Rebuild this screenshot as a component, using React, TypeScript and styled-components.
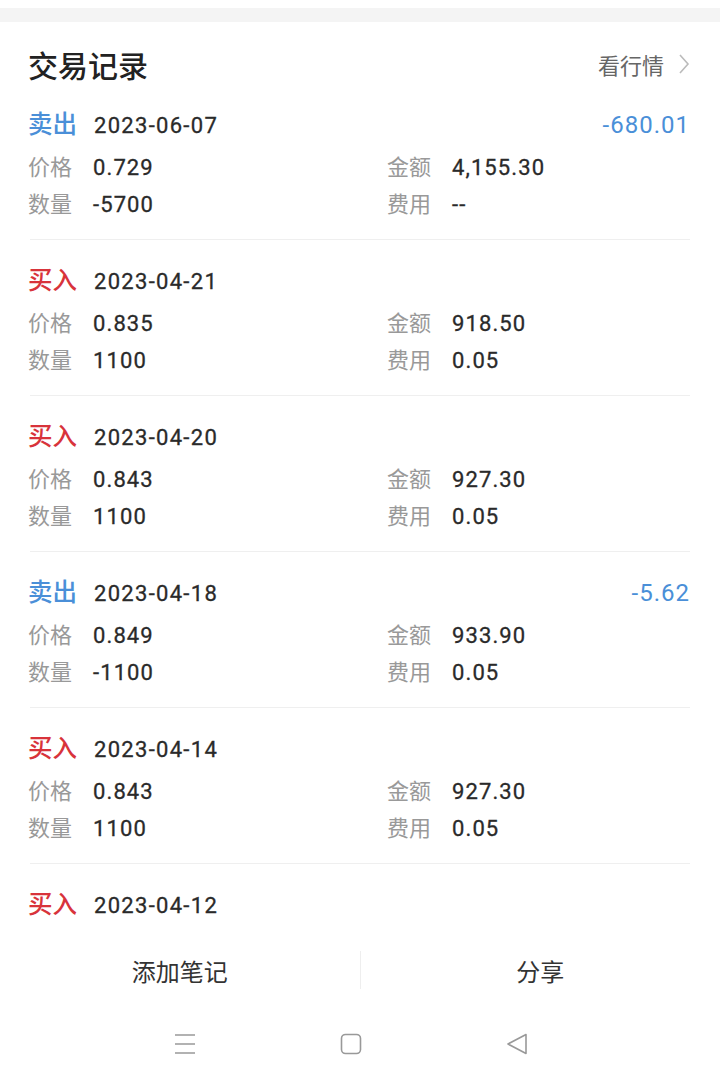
import React from 'react';
import styled, { createGlobalStyle } from 'styled-components';

type Trade = {
    side: 'buy' | 'sell';
    date: string;
    profit?: string;
    price?: string;
    qty?: string;
    amount?: string;
    fee?: string;
};

// the last entry is only partly scrolled into view, its fields sit under the action bar
const trades: Trade[] = [
    { side: 'sell', date: '2023-06-07', profit: '-680.01', price: '0.729', qty: '-5700', amount: '4,155.30', fee: '--' },
    { side: 'buy', date: '2023-04-21', price: '0.835', qty: '1100', amount: '918.50', fee: '0.05' },
    { side: 'buy', date: '2023-04-20', price: '0.843', qty: '1100', amount: '927.30', fee: '0.05' },
    { side: 'sell', date: '2023-04-18', profit: '-5.62', price: '0.849', qty: '-1100', amount: '933.90', fee: '0.05' },
    { side: 'buy', date: '2023-04-14', price: '0.843', qty: '1100', amount: '927.30', fee: '0.05' },
    { side: 'buy', date: '2023-04-12' },
];

const GlobalStyle = createGlobalStyle`
    html, body {
        margin: 0;
        padding: 0;
        background: #fff;
    }
    body {
        font-family: Roboto, "Noto Sans CJK SC", sans-serif;
        -webkit-font-smoothing: antialiased;
    }
`;

const App: React.FC = () => {
    return (
        <SPage>
            <GlobalStyle />
            <STopBand />
            <SList>
                <STitleRow>
                    <STitle>交易记录</STitle>
                    <SMarketLink>
                        看行情
                        <svg width="12" height="22" viewBox="0 0 12 22">
                            <path d="M2 2 L10 11 L2 20" fill="none" stroke="#bbb" strokeWidth="1.6" />
                        </svg>
                    </SMarketLink>
                </STitleRow>
                {trades.map((t, i) => (
                    <SRecord key={i}>
                        <SHeader>
                            <SSide $side={t.side}>{t.side === 'buy' ? '买入' : '卖出'}</SSide>
                            <SDate>{t.date}</SDate>
                            {t.profit && <SProfit>{t.profit}</SProfit>}
                        </SHeader>
                        {t.price && (
                            <SGrid>
                                <SField>
                                    <SLabel>价格</SLabel>
                                    <SValue>{t.price}</SValue>
                                </SField>
                                <SField>
                                    <SLabel>金额</SLabel>
                                    <SValue>{t.amount}</SValue>
                                </SField>
                                <SField>
                                    <SLabel>数量</SLabel>
                                    <SValue>{t.qty}</SValue>
                                </SField>
                                <SField>
                                    <SLabel>费用</SLabel>
                                    <SValue>{t.fee}</SValue>
                                </SField>
                            </SGrid>
                        )}
                    </SRecord>
                ))}
            </SList>
            <SActionBar>
                <SAction>添加笔记</SAction>
                <SActionDivider />
                <SAction>分享</SAction>
            </SActionBar>
            <SNavBar>
                <svg width="22" height="22" viewBox="0 0 22 22">
                    <path d="M1 2 H21 M1 11 H21 M1 20 H21" stroke="#999" strokeWidth="1.6" fill="none" />
                </svg>
                <svg width="22" height="22" viewBox="0 0 22 22">
                    <rect x="1.5" y="1.5" width="19" height="19" rx="4" stroke="#999" strokeWidth="1.6" fill="none" />
                </svg>
                <svg width="22" height="22" viewBox="0 0 22 22">
                    <path d="M20 1.5 L2 11 L20 20.5 Z" stroke="#999" strokeWidth="1.6" strokeLinejoin="round" fill="none" />
                </svg>
            </SNavBar>
        </SPage>
    );
};

export default App;

const SPage = styled.div`
    display: flex;
    flex-direction: column;
    height: 1082px;
    width: 720px;
    background: #fff;
    overflow: hidden;
`;

const STopBand = styled.div`
    height: 14px;
    margin-top: 8px;
    background: #f4f4f4;
    flex-shrink: 0;
`;

const SList = styled.div`
    flex: 1;
    overflow: hidden;
    padding: 0 30px 0 28px;
`;

const STitleRow = styled.div`
    display: flex;
    align-items: center;
    justify-content: space-between;
    height: 40px;
    margin-top: 22px;
`;

const STitle = styled.div`
    font-size: 30px;
    font-weight: 500;
    color: #222;
    font-family: "Noto Sans CJK SC", sans-serif;
`;

const SMarketLink = styled.div`
    display: flex;
    align-items: center;
    gap: 14px;
    font-size: 22px;
    color: #666;
    font-family: "Noto Sans CJK SC", sans-serif;
`;

const SRecord = styled.div`
    padding: 21px 0 18px;
    border-bottom: 1px solid #efefef;
    margin-left: 2px;

    &:last-child {
        border-bottom: none;
    }
`;

const SHeader = styled.div`
    display: flex;
    align-items: baseline;
    height: 36px;
    line-height: 36px;
    margin-left: -2px;
`;

const SSide = styled.span<{ $side: 'buy' | 'sell' }>`
    font-size: 24.5px;
    font-weight: 500;
    font-family: "Noto Sans CJK SC", sans-serif;
    color: ${p => (p.$side === 'buy' ? '#d8333b' : '#4a8fd8')};
`;

const SDate = styled.span`
    margin-left: 17px;
    font-size: 22px;
    letter-spacing: 1.3px;
    color: #2a2a2a;
    -webkit-text-stroke: 0.3px #2a2a2a;
`;

const SProfit = styled.span`
    margin-left: auto;
    font-size: 24px;
    letter-spacing: 1px;
    color: #4a8fd8;
`;

const SGrid = styled.div`
    display: grid;
    grid-template-columns: 359px 1fr;
    grid-auto-rows: 37px;
    margin-top: 6px;
    margin-left: -2px;
`;

const SField = styled.div`
    display: flex;
    align-items: baseline;
    gap: 21px;
    line-height: 37px;
`;

const SLabel = styled.span`
    font-size: 22px;
    color: #999;
    font-family: "Noto Sans CJK SC", sans-serif;
`;

const SValue = styled.span`
    font-size: 22px;
    letter-spacing: 1.1px;
    color: #2a2a2a;
    -webkit-text-stroke: 0.3px #2a2a2a;
`;

const SActionBar = styled.div`
    display: flex;
    align-items: center;
    height: 70px;
    flex-shrink: 0;
`;

const SAction = styled.div`
    flex: 1;
    text-align: center;
    font-size: 24px;
    color: #333;
    font-family: "Noto Sans CJK SC", sans-serif;
`;

const SActionDivider = styled.div`
    width: 1px;
    height: 38px;
    background: #eee;
`;

const SNavBar = styled.div`
    display: flex;
    align-items: center;
    justify-content: center;
    gap: 144px;
    height: 77px;
    flex-shrink: 0;
    padding-right: 18px;
`;
